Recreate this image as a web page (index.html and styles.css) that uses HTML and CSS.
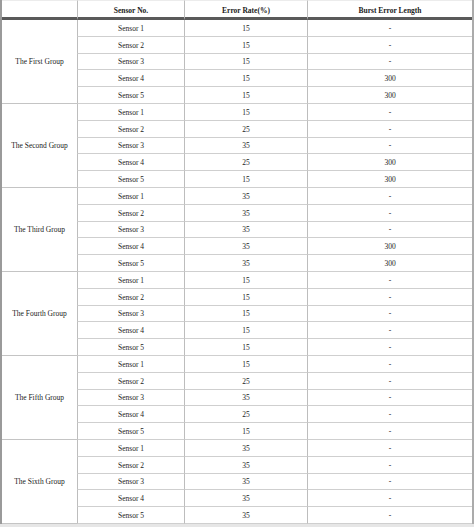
FILE: index.html
```html
<!DOCTYPE html>
<html>
<head>
<meta charset="utf-8">
<link rel="stylesheet" href="styles.css">
</head>
<body>
<div class="table">
  <div class="cell head c1"></div>
  <div class="cell head">Sensor No.</div>
  <div class="cell head">Error Rate(%)</div>
  <div class="cell head">Burst Error Length</div>

  <div class="cell group">The First Group</div>
  <div class="cell">Sensor 1</div><div class="cell">15</div><div class="cell">-</div>
  <div class="cell">Sensor 2</div><div class="cell">15</div><div class="cell">-</div>
  <div class="cell">Sensor 3</div><div class="cell">15</div><div class="cell">-</div>
  <div class="cell">Sensor 4</div><div class="cell">15</div><div class="cell">300</div>
  <div class="cell">Sensor 5</div><div class="cell">15</div><div class="cell">300</div>

  <div class="cell group">The Second Group</div>
  <div class="cell">Sensor 1</div><div class="cell">15</div><div class="cell">-</div>
  <div class="cell">Sensor 2</div><div class="cell">25</div><div class="cell">-</div>
  <div class="cell">Sensor 3</div><div class="cell">35</div><div class="cell">-</div>
  <div class="cell">Sensor 4</div><div class="cell">25</div><div class="cell">300</div>
  <div class="cell">Sensor 5</div><div class="cell">15</div><div class="cell">300</div>

  <div class="cell group">The Third Group</div>
  <div class="cell">Sensor 1</div><div class="cell">35</div><div class="cell">-</div>
  <div class="cell">Sensor 2</div><div class="cell">35</div><div class="cell">-</div>
  <div class="cell">Sensor 3</div><div class="cell">35</div><div class="cell">-</div>
  <div class="cell">Sensor 4</div><div class="cell">35</div><div class="cell">300</div>
  <div class="cell">Sensor 5</div><div class="cell">35</div><div class="cell">300</div>

  <div class="cell group">The Fourth Group</div>
  <div class="cell">Sensor 1</div><div class="cell">15</div><div class="cell">-</div>
  <div class="cell">Sensor 2</div><div class="cell">15</div><div class="cell">-</div>
  <div class="cell">Sensor 3</div><div class="cell">15</div><div class="cell">-</div>
  <div class="cell">Sensor 4</div><div class="cell">15</div><div class="cell">-</div>
  <div class="cell">Sensor 5</div><div class="cell">15</div><div class="cell">-</div>

  <div class="cell group">The Fifth Group</div>
  <div class="cell">Sensor 1</div><div class="cell">15</div><div class="cell">-</div>
  <div class="cell">Sensor 2</div><div class="cell">25</div><div class="cell">-</div>
  <div class="cell">Sensor 3</div><div class="cell">35</div><div class="cell">-</div>
  <div class="cell">Sensor 4</div><div class="cell">25</div><div class="cell">-</div>
  <div class="cell">Sensor 5</div><div class="cell">15</div><div class="cell">-</div>

  <div class="cell group">The Sixth Group</div>
  <div class="cell">Sensor 1</div><div class="cell">35</div><div class="cell">-</div>
  <div class="cell">Sensor 2</div><div class="cell">35</div><div class="cell">-</div>
  <div class="cell">Sensor 3</div><div class="cell">35</div><div class="cell">-</div>
  <div class="cell">Sensor 4</div><div class="cell">35</div><div class="cell">-</div>
  <div class="cell">Sensor 5</div><div class="cell">35</div><div class="cell">-</div>
</div>
</body>
</html>
```
FILE: styles.css
```css
html, body {
  margin: 0;
  padding: 0;
  background: #e6e6e6;
  height: 527px;
  overflow: hidden;
}

.table {
  box-sizing: border-box;
  width: 474px;
  height: 524px;
  background: #fff;
  border-left: 2px solid #9a9a9a;
  border-right: 2px solid #ababab;
  display: grid;
  grid-template-columns: 75px 107px 123px 165px;
  grid-template-rows: 20px repeat(30, 16.8px);
  font-family: "Liberation Serif", "Times New Roman", serif;
  font-size: 7.5px;
  color: #222;
}

.cell {
  box-sizing: border-box;
  display: flex;
  align-items: center;
  justify-content: center;
  padding-top: 1px;
  border-bottom: 1px solid #cfcfcf;
  border-left: 1px solid #bdbdbd;
  white-space: nowrap;
}

.head {
  font-weight: bold;
  padding-top: 2px;
  border-top: 1px solid #ececec;
  border-bottom: 3px solid #5a5a5a;
}

.c1,
.group {
  border-left: none;
}

.group {
  grid-column: 1;
  grid-row: span 5;
  border-bottom-color: #c4c4c4;
}
```
